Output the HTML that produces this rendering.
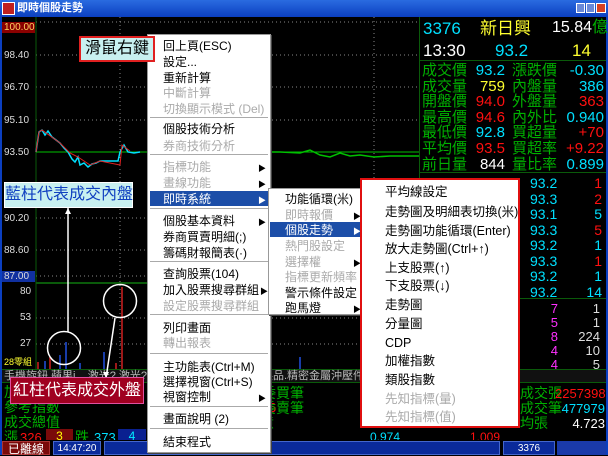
<!DOCTYPE html>
<html><head><meta charset="utf-8"><style>
*{margin:0;padding:0;box-sizing:border-box}
body{width:608px;height:455px;overflow:hidden;background:#000;font-family:"Liberation Sans","Noto Sans CJK TC",sans-serif;position:relative}
.a{position:absolute;white-space:nowrap;line-height:1}
.pl{font-size:10px;color:#ddd;left:4px}
.g{color:#00b000}.c{color:#00e0ff}.r{color:#ff1010}.y{color:#ffff30}.w{color:#fff}.m{color:#ff30ff}
.rp{font-size:17px}
.menu{position:absolute;background:#fff;border:1px solid #999;box-shadow:1px 1px 0 #444}
.mi{position:absolute;font-size:12px;color:#000;white-space:nowrap;line-height:1}
.dis{color:#aaa}
.sep{position:absolute;height:2px;border-top:1px solid #aaa;border-bottom:1px solid #fff}
.hl{position:absolute;background:#1c4ea8}
.arr{position:absolute;font-size:8px;color:#000}
.sm3{font-size:12.5px;left:23px}
</style></head><body>
<!-- title bar -->
<div class="a" style="left:0;top:0;width:608px;height:17px;background:linear-gradient(#2a6be0,#0b3fc0)"></div>
<div class="a" style="left:2px;top:2px;width:13px;height:13px;background:#c02020;border:1px solid #fff"></div>
<div class="a" style="left:17px;top:3px;font-size:11px;font-weight:bold;color:#fff">即時個股走勢</div>
<div class="a" style="left:576px;top:3px;width:9px;height:10px;background:#6a8ad8;border:1px solid #fff"></div>
<div class="a" style="left:586px;top:3px;width:9px;height:10px;background:#6a8ad8;border:1px solid #fff"></div>
<div class="a" style="left:596px;top:3px;width:10px;height:10px;background:#d84020;border:1px solid #fff"></div>
<div class="a" style="left:0;top:17px;width:2px;height:438px;background:#0b3fc0"></div>
<div class="a" style="left:606px;top:17px;width:2px;height:438px;background:#0b3fc0"></div>

<!-- chart -->
<svg class="a" style="left:0;top:17px" width="420" height="352">
<g stroke="#888" stroke-dasharray="1,3" stroke-width="1">
<line x1="36" y1="5" x2="420" y2="5"/><line x1="36" y1="38" x2="420" y2="38"/><line x1="36" y1="70" x2="420" y2="70"/><line x1="36" y1="103" x2="420" y2="103"/><line x1="36" y1="201" x2="420" y2="201"/><line x1="36" y1="233" x2="420" y2="233"/><line x1="36" y1="259" x2="420" y2="259"/>
<line x1="36" y1="301" x2="420" y2="301"/><line x1="36" y1="327" x2="420" y2="327"/>
<line x1="120" y1="0" x2="120" y2="350"/><line x1="374" y1="0" x2="374" y2="350"/>
</g>
<line x1="36" y1="0" x2="36" y2="352" stroke="#0a5a0a"/>
<line x1="36" y1="266" x2="420" y2="266" stroke="#0a5a0a" stroke-width="2"/>
<line x1="36" y1="135" x2="420" y2="135" stroke="#00c000"/>
<polyline fill="none" stroke="#00e0ff" stroke-width="1.5" points="36,135 39,115 42,113 45,118 48,114 52,120 56,123 60,126 64,131 68,135 72,142 75,145 78,140 80,148 84,146 88,150 92,147 96,146 100,144 108,144 118,144 120,135 124,128 128,135 134,136 140,135"/>
<polyline fill="none" stroke="#e02020" stroke-width="1" points="36,135 39,115 42,113 60,126 70,136 78,140 90,148 100,144 120,148 122,128 130,134"/>
<polyline fill="none" stroke="#00c000" stroke-width="1.5" points="270,135 280,135 300,136 310,133 320,138 330,140 340,136 350,139 360,138 374,140 390,139 420,139"/>
<g stroke="#2050e0" stroke-width="1.5"><line x1="66" y1="352" x2="66" y2="325"/><line x1="60" y1="352" x2="60" y2="338"/><line x1="104" y1="352" x2="104" y2="335"/><line x1="45" y1="352" x2="45" y2="344"/><line x1="80" y1="352" x2="80" y2="346"/><line x1="300" y1="352" x2="300" y2="340"/><line x1="375" y1="352" x2="375" y2="345"/></g>
<g stroke="#d02020" stroke-width="1.5"><line x1="122" y1="352" x2="122" y2="270"/><line x1="50" y1="352" x2="50" y2="340"/><line x1="38" y1="352" x2="38" y2="345"/><line x1="116" y1="352" x2="116" y2="346"/></g>
</svg>
<div class="a pl" style="left:2px;top:22px;width:33px;height:11px;background:#8a0000;color:#ffd060;padding:1px 2px">100.00</div>
<div class="a pl" style="top:51px">98.40</div>
<div class="a pl" style="top:83px">96.70</div>
<div class="a pl" style="top:116px">95.10</div>
<div class="a pl" style="top:148px">93.50</div>
<div class="a pl" style="top:214px">90.20</div>
<div class="a pl" style="top:246px">88.60</div>
<div class="a pl" style="left:2px;top:271px;width:33px;height:11px;background:#1030a0;padding:1px 2px;color:#ddd">87.00</div>
<div class="a pl" style="left:20px;top:287px">80</div>
<div class="a pl" style="left:20px;top:313px">53</div>
<div class="a pl" style="left:20px;top:339px">27</div>
<div class="a y" style="left:4px;top:358px;font-size:9px">28零組</div>

<!-- right panel -->
<div class="a" style="left:419px;top:17px;width:1px;height:352px;background:#0a5a0a"></div>
<div class="a" style="left:420px;top:60px;width:186px;height:1px;background:#0a5a0a"></div>
<div class="a" style="left:420px;top:172px;width:186px;height:1px;background:#0a5a0a"></div>
<div class="a" style="left:420px;top:298px;width:186px;height:1px;background:#0a5a0a"></div>
<div class="a rp c" style="left:423px;top:20px">3376</div>
<div class="a rp y" style="left:480px;top:20px">新日興</div>
<div class="a w" style="left:552px;top:20px;font-size:16px">15.84<span class="g">億</span></div>
<div class="a rp w" style="left:423px;top:42px">13:30</div>
<div class="a rp c" style="left:495px;top:42px">93.2</div>
<div class="a rp y" style="left:572px;top:42px">14</div>
<div class="a" style="left:422px;top:63px;font-size:15px;line-height:15.6px">
<div style="position:relative;width:184px">
<span class="g">成交價</span><br><span class="g">成交量</span><br><span class="g">開盤價</span><br><span class="g">最高價</span><br><span class="g">最低價</span><br><span class="g">平均價</span><br><span class="g">前日量</span>
<div style="position:absolute;left:0;top:0;width:83px;text-align:right"><span class="c">93.2</span><br><span class="y">759</span><br><span class="r">94.0</span><br><span class="r">94.6</span><br><span class="c">92.8</span><br><span class="r">93.5</span><br><span class="w">844</span></div>
<div style="position:absolute;left:90px;top:0" class="g">漲跌價<br>內盤量<br>外盤量<br>內外比<br>買超量<br>買超率<br>量比率</div>
<div style="position:absolute;left:90px;top:0;width:92px;text-align:right"><span class="c">-0.30</span><br><span class="c">386</span><br><span class="r">363</span><br><span class="c">0.940</span><br><span class="r">+70</span><br><span class="r">+9.22</span><br><span class="c">0.899</span></div>
</div></div>
<div class="a" style="left:530px;top:176px;font-size:14px;line-height:15.5px;width:72px">
<div class="c">93.2<br>93.3<br>93.1<br>93.3<br>93.2<br>93.3<br>93.2<br>93.2</div>
<div style="position:absolute;left:0;top:0;width:72px;text-align:right"><span class="r">1</span><br><span class="r">2</span><br><span class="c">5</span><br><span class="r">5</span><br><span class="c">1</span><br><span class="r">1</span><br><span class="c">1</span><br><span class="c">14</span></div>
</div>
<div class="a" style="left:500px;top:302px;font-size:13px;line-height:14px;width:100px">
<div class="m" style="width:58px;text-align:right">7<br>5<br>8<br>4<br>4</div>
<div style="position:absolute;left:0;top:0;width:100px;text-align:right;color:#ddd">1<br>1<br>224<br>10<br>5</div>
</div>

<!-- bottom -->
<div class="a" style="left:2px;top:369px;width:604px;height:14px;background:#111;border-top:1px solid #0a5a0a;border-bottom:1px solid #0a5a0a"></div>
<div class="a" style="left:4px;top:371px;font-size:11px;color:#bbb">手機旋鈕 蘋果i... 激光? 激光?</div>
<div class="a" style="left:262px;top:371px;font-size:11px;color:#bbb">製品.精密金屬沖壓件</div>
<div class="a g" style="left:4px;top:385px;font-size:14px;line-height:15px">加<br>參考指數<br>成交總值<br>漲</div>
<div class="a r" style="left:240px;top:386px;font-size:13px">356</div>
<div class="a r" style="left:200px;top:401px;font-size:13px">7145.81 &nbsp;+16</div>
<div class="a w" style="left:220px;top:416px;font-size:13px">509.61<span class="g" style="font-size:14px">億</span></div>
<div class="a r" style="left:20px;top:431px;font-size:13px">326</div>
<div class="a" style="left:46px;top:429px;width:27px;height:14px;background:#7a0a0a;color:#ff0;font-size:12px;text-align:center;padding-top:1px">3</div>
<div class="a g" style="left:75px;top:430px;font-size:14px">跌</div>
<div class="a c" style="left:94px;top:431px;font-size:13px">373</div>
<div class="a" style="left:118px;top:429px;width:28px;height:14px;background:#0a2090;color:#0ef;font-size:12px;text-align:center;padding-top:1px">4</div>
<div class="a c" style="left:238px;top:401px;font-size:13px;line-height:15px">269<br>913<br>983</div>
<div class="a g" style="left:262px;top:386px;font-size:14px;line-height:15px">委買筆<br>委賣筆</div>
<div class="a c" style="left:370px;top:431px;font-size:12px">0.974</div>
<div class="a r" style="left:470px;top:431px;font-size:12px">1.009</div>
<div class="a g" style="left:520px;top:386px;font-size:14px;line-height:15px">成交張<br>成交筆<br>均張</div>
<div class="a" style="left:555px;top:386px;font-size:13px;line-height:15px;width:50px;text-align:right"><span class="r">2257398</span><br><span class="c">477979</span><br><span class="w">4.723</span></div>
<div class="a" style="left:2px;top:440px;width:604px;height:15px;background:#000"></div>
<div class="a" style="left:2px;top:441px;width:48px;height:14px;background:#7a0a0a;border:1px solid #a33;color:#fff;font-size:12px;text-align:center;padding-top:1px">已離線</div>
<div class="a" style="left:53px;top:441px;width:48px;height:14px;background:#0a2a9a;border:1px solid #46c;color:#fff;font-size:10px;text-align:center;padding-top:2px">14:47:20</div>
<div class="a" style="left:104px;top:441px;width:396px;height:14px;background:#0a2a9a;border:1px solid #46c"></div>
<div class="a" style="left:503px;top:441px;width:52px;height:14px;background:#0a2a9a;border:1px solid #46c;color:#fff;font-size:10px;text-align:center;padding-top:2px">3376</div>
<div class="a" style="left:557px;top:441px;width:49px;height:14px;background:#1a3aaa"></div>

<!-- main menu -->
<div class="menu" style="left:147px;top:34px;width:124px;height:419px">
<div class="hl" style="left:2px;top:156px;width:118px;height:15px"></div>
<div class="mi" style="left:15px;top:5px">回上頁(ESC)</div>
<div class="mi" style="left:15px;top:21px">設定...</div>
<div class="mi" style="left:15px;top:37px">重新計算</div>
<div class="mi dis" style="left:15px;top:52px">中斷計算</div>
<div class="mi dis" style="left:15px;top:68px">切換顯示模式 (Del)</div>
<div class="sep" style="left:2px;top:82px;width:118px"></div>
<div class="mi" style="left:15px;top:88px">個股技術分析</div>
<div class="mi dis" style="left:15px;top:105px">券商技術分析</div>
<div class="sep" style="left:2px;top:119px;width:118px"></div>
<div class="mi dis" style="left:15px;top:126px">指標功能</div><div class="arr dis" style="left:110px;top:128px">▶</div>
<div class="mi dis" style="left:15px;top:142px">畫線功能</div><div class="arr dis" style="left:110px;top:144px">▶</div>
<div class="mi" style="left:15px;top:158px;color:#fff">即時系統</div><div class="arr" style="left:110px;top:160px;color:#fff">▶</div>
<div class="sep" style="left:2px;top:173px;width:118px"></div>
<div class="mi" style="left:15px;top:180px">個股基本資料</div><div class="arr" style="left:110px;top:182px">▶</div>
<div class="mi" style="left:15px;top:196px">券商買賣明細(;)</div>
<div class="mi" style="left:15px;top:212px">籌碼財報簡表(·)</div>
<div class="sep" style="left:2px;top:226px;width:118px"></div>
<div class="mi" style="left:15px;top:233px">查詢股票(104)</div>
<div class="mi" style="left:15px;top:249px">加入股票搜尋群組</div><div class="arr" style="left:112px;top:251px">▶</div>
<div class="mi dis" style="left:15px;top:265px">設定股票搜尋群組</div>
<div class="sep" style="left:2px;top:279px;width:118px"></div>
<div class="mi" style="left:15px;top:287px">列印畫面</div>
<div class="mi dis" style="left:15px;top:302px">轉出報表</div>
<div class="sep" style="left:2px;top:318px;width:118px"></div>
<div class="mi" style="left:15px;top:326px">主功能表(Ctrl+M)</div>
<div class="mi" style="left:15px;top:341px">選擇視窗(Ctrl+S)</div>
<div class="mi" style="left:15px;top:356px">視窗控制</div><div class="arr" style="left:110px;top:358px">▶</div>
<div class="sep" style="left:2px;top:371px;width:118px"></div>
<div class="mi" style="left:15px;top:378px">畫面說明 (2)</div>
<div class="sep" style="left:2px;top:393px;width:118px"></div>
<div class="mi" style="left:15px;top:401px">結束程式</div>
</div>

<!-- submenu 2 -->
<div class="menu" style="left:268px;top:188px;width:95px;height:127px">
<div class="hl" style="left:1px;top:33px;width:92px;height:15px"></div>
<div class="mi" style="left:16px;top:4px">功能循環(米)</div>
<div class="mi dis" style="left:16px;top:20px">即時報價</div><div class="arr dis" style="left:84px;top:22px">▶</div>
<div class="mi" style="left:16px;top:35px;color:#fff">個股走勢</div><div class="arr" style="left:84px;top:37px;color:#fff">▶</div>
<div class="mi dis" style="left:16px;top:51px">熱門股設定</div>
<div class="mi dis" style="left:16px;top:67px">選擇權</div><div class="arr dis" style="left:84px;top:69px">▶</div>
<div class="mi dis" style="left:16px;top:82px">指標更新頻率</div>
<div class="mi" style="left:16px;top:98px">警示條件設定</div>
<div class="mi" style="left:16px;top:113px">跑馬燈</div><div class="arr" style="left:84px;top:115px">▶</div>
</div>

<!-- submenu 3 -->
<div class="a" style="left:360px;top:178px;width:160px;height:250px;background:#fff;border:2px solid #e01010">
<div class="mi sm3" style="top:6px">平均線設定</div>
<div class="mi sm3" style="top:26px">走勢圖及明細表切換(米)</div>
<div class="mi sm3" style="top:45px">走勢圖功能循環(Enter)</div>
<div class="mi sm3" style="top:63px">放大走勢圖(Ctrl+↑)</div>
<div class="mi sm3" style="top:82px">上支股票(↑)</div>
<div class="mi sm3" style="top:100px">下支股票(↓)</div>
<div class="mi sm3" style="top:119px">走勢圖</div>
<div class="mi sm3" style="top:138px">分量圖</div>
<div class="mi sm3" style="top:157px">CDP</div>
<div class="mi sm3" style="top:175px">加權指數</div>
<div class="mi sm3" style="top:194px">類股指數</div>
<div class="mi sm3 dis" style="top:213px">先知指標(量)</div>
<div class="mi sm3 dis" style="top:231px">先知指標(值)</div>
</div>

<!-- annotations (on top) -->
<div class="a" style="left:79px;top:36px;width:76px;height:26px;background:#c8f0f0;border:2px solid #e02020;font-size:16px;color:#000;text-align:center;padding-top:3px;z-index:5">滑鼠右鍵</div>
<div class="a" style="left:4px;top:182px;width:129px;height:26px;background:#c8f0f0;border:1px solid #fff;font-size:16px;color:#1040c0;text-align:center;padding-top:4px;z-index:5">藍柱代表成交內盤</div>
<div class="a" style="left:10px;top:377px;width:134px;height:27px;background:#a00020;border:1px solid #e050a0;font-size:16px;color:#fff;text-align:center;padding-top:5px;z-index:5">紅柱代表成交外盤</div>
<svg class="a" style="left:0;top:0;z-index:4" width="160" height="400">
<line x1="68" y1="208" x2="68" y2="332" stroke="#fff" stroke-width="1.5"/>
<line x1="115" y1="318" x2="106" y2="378" stroke="#fff" stroke-width="1.5"/>
<circle cx="64" cy="348" r="16.5" fill="none" stroke="#fff" stroke-width="1.5"/>
<circle cx="120" cy="301" r="16.5" fill="none" stroke="#fff" stroke-width="1.5"/>
<path d="M68,208 l-3,6 h6z M106,378 l-3,-6 h6z" fill="#fff"/>
</svg>
</body></html>
